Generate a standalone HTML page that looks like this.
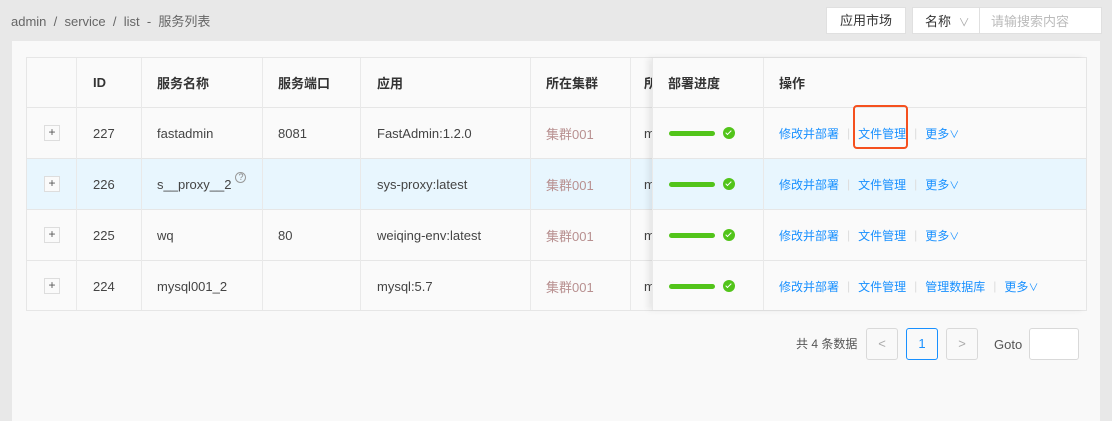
<!DOCTYPE html><html><head><meta charset="utf-8"><style>
*{box-sizing:border-box;margin:0;padding:0}
body{width:1112px;height:414px;background:#e8e8e8;font-family:"Liberation Sans","Noto Sans CJK SC",sans-serif;font-size:13px;color:#444;position:relative;overflow:hidden}
.a{position:absolute}
.card{left:12px;top:41px;width:1088px;height:380px;background:#f9f9f9}
.tbl{left:26px;top:57px;width:1061px;height:254px;border:1px solid #e6e6e6;background:#fafafa}
.row{position:absolute;left:0;width:1059px;border-top:1px solid #e6e6e6}
.c{position:absolute;top:0;height:100%;display:flex;align-items:center}
.vl{position:absolute;top:0;width:1px;background:#e9e9e9;height:252px}
.lk{color:#1890ff;font-size:12px}
.sep{color:#ddd;margin:0 8px;font-size:12px}
.bar{width:46px;height:5px;border-radius:3px;background:#52c41a}
.ok{width:12px;height:12px;border-radius:50%;background:#52c41a;margin-left:8px;position:relative}
.ok:after{content:"";position:absolute;left:4px;top:2px;width:2px;height:5px;border:solid #fff;border-width:0 1.5px 1.5px 0;transform:rotate(45deg)}
.plus{width:16px;height:16px;border:1px solid #ddd;background:#fafafa;font-size:12px;line-height:13px;text-align:center;color:#555}
.btn{border:1px solid #d9d9d9;border-radius:3px;background:#f9f9f9}
.hd{font-weight:bold;color:#333}
</style></head><body>
<div class="a" style="left:11px;top:11px;color:#666">admin &nbsp;/&nbsp; service &nbsp;/&nbsp; list &nbsp;-&nbsp; 服务列表</div>
<div class="a" style="left:826px;top:7px;width:80px;height:27px;background:#fff;border:1px solid #e0e0e0;text-align:center;line-height:25px;color:#333">应用市场</div>
<div class="a" style="left:912px;top:7px;width:190px;height:27px;background:#fff;border:1px solid #e0e0e0"></div>
<div class="a" style="left:925px;top:11px;color:#333">名称 <span style="color:#aaa;font-size:11px;margin-left:4px">∨</span></div>
<div class="a" style="left:979px;top:7px;width:1px;height:27px;background:#e0e0e0"></div>
<div class="a" style="left:991px;top:11px;color:#bbb">请输搜索内容</div>
<div class="a card"></div>
<div class="a tbl">
<div class="row hd" style="top:-1px;height:51px;border-top:none">
<div class="c" style="left:66px">ID</div><div class="c" style="left:130px">服务名称</div><div class="c" style="left:251px">服务端口</div><div class="c" style="left:350px">应用</div><div class="c" style="left:519px">所在集群</div><div class="c" style="left:617px">所</div></div>
<div class="row" style="top:49px;height:51px"><div class="c" style="left:17px"><div class="plus">+</div></div><div class="c" style="left:66px">227</div><div class="c" style="left:130px">fastadmin</div><div class="c" style="left:251px">8081</div><div class="c" style="left:350px">FastAdmin:1.2.0</div><div class="c" style="left:519px;color:#b89090">集群001</div><div class="c" style="left:617px">m</div></div>
<div class="row" style="top:100px;height:51px;background:#e8f6fe"><div class="c" style="left:17px"><div class="plus">+</div></div><div class="c" style="left:66px">226</div><div class="c" style="left:130px">s__proxy__2 <span style="font-size:9px;color:#888;position:relative;top:-7px;margin-left:4px;border:1px solid #999;border-radius:50%;width:11px;height:11px;line-height:9px;text-align:center;display:inline-block">?</span></div><div class="c" style="left:350px">sys-proxy:latest</div><div class="c" style="left:519px;color:#b89090">集群001</div><div class="c" style="left:617px">m</div></div>
<div class="row" style="top:151px;height:51px"><div class="c" style="left:17px"><div class="plus">+</div></div><div class="c" style="left:66px">225</div><div class="c" style="left:130px">wq</div><div class="c" style="left:251px">80</div><div class="c" style="left:350px">weiqing-env:latest</div><div class="c" style="left:519px;color:#b89090">集群001</div><div class="c" style="left:617px">m</div></div>
<div class="row" style="top:202px;height:51px"><div class="c" style="left:17px"><div class="plus">+</div></div><div class="c" style="left:66px">224</div><div class="c" style="left:130px">mysql001_2</div><div class="c" style="left:350px">mysql:5.7</div><div class="c" style="left:519px;color:#b89090">集群001</div><div class="c" style="left:617px">m</div></div>
<div class="vl" style="left:49px"></div><div class="vl" style="left:114px"></div><div class="vl" style="left:235px"></div><div class="vl" style="left:333px"></div><div class="vl" style="left:503px"></div><div class="vl" style="left:603px"></div>
<div class="a" style="left:625px;top:0;width:434px;height:252px;background:#fafafa;box-shadow:-4px 0 6px rgba(0,0,0,.08)">
<div class="row hd" style="top:-1px;height:51px;width:434px;border-top:none"><div class="c" style="left:16px">部署进度</div><div class="c" style="left:127px">操作</div></div>
<div class="row" style="top:49px;height:51px;width:434px"><div class="c" style="left:17px"><div class="bar"></div><div class="ok"></div></div><div class="c" style="left:127px"><span class="lk">修改并部署</span><span class="sep">|</span><span class="lk">文件管理</span><span class="sep">|</span><span class="lk">更多<span style="font-size:10px">∨</span></span></div></div>
<div class="row" style="top:100px;height:51px;width:434px;background:#e8f6fe"><div class="c" style="left:17px"><div class="bar"></div><div class="ok"></div></div><div class="c" style="left:127px"><span class="lk">修改并部署</span><span class="sep">|</span><span class="lk">文件管理</span><span class="sep">|</span><span class="lk">更多<span style="font-size:10px">∨</span></span></div></div>
<div class="row" style="top:151px;height:51px;width:434px"><div class="c" style="left:17px"><div class="bar"></div><div class="ok"></div></div><div class="c" style="left:127px"><span class="lk">修改并部署</span><span class="sep">|</span><span class="lk">文件管理</span><span class="sep">|</span><span class="lk">更多<span style="font-size:10px">∨</span></span></div></div>
<div class="row" style="top:202px;height:51px;width:434px"><div class="c" style="left:17px"><div class="bar"></div><div class="ok"></div></div><div class="c" style="left:127px"><span class="lk">修改并部署</span><span class="sep">|</span><span class="lk">文件管理</span><span class="sep">|</span><span class="lk">管理数据库</span><span class="sep">|</span><span class="lk">更多<span style="font-size:10px">∨</span></span></div></div>
<div class="vl" style="left:0"></div><div class="vl" style="left:111px"></div>
</div>
</div>
<div class="a" style="left:853px;top:105px;width:55px;height:44px;border:2px solid #f5501e;border-radius:4px"></div>
<div class="a" style="left:796px;top:335px;color:#555;font-size:12px">共 4 条数据</div>
<div class="a btn" style="left:866px;top:328px;width:32px;height:32px;text-align:center;line-height:30px;color:#aaa">&lt;</div>
<div class="a btn" style="left:906px;top:328px;width:32px;height:32px;border-color:#1890ff;text-align:center;line-height:30px;color:#1890ff">1</div>
<div class="a btn" style="left:946px;top:328px;width:32px;height:32px;text-align:center;line-height:30px;color:#aaa">&gt;</div>
<div class="a" style="left:994px;top:337px;color:#555">Goto</div>
<div class="a btn" style="left:1029px;top:328px;width:50px;height:32px;background:#fff"></div>
</body></html>
